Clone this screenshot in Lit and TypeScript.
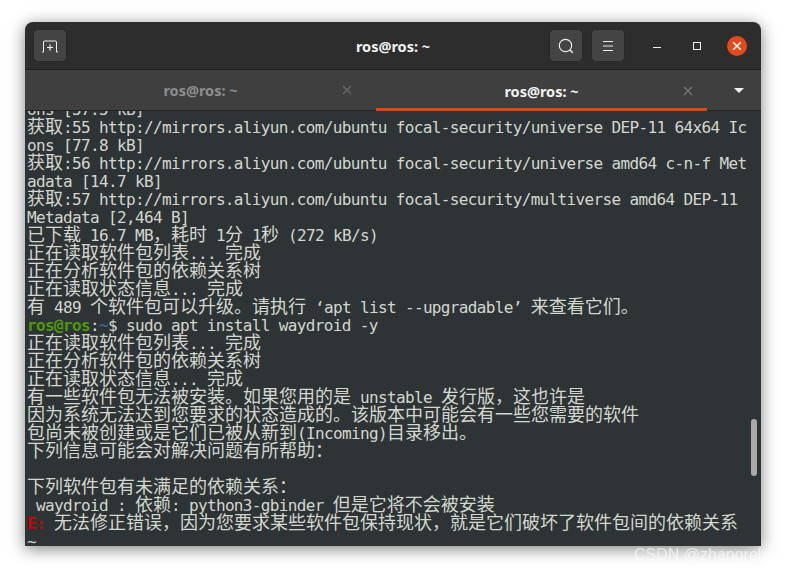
import { LitElement, html, css } from "lit";
import { customElement } from "lit/decorators.js";

const LINES = [
  "ons [57.5 kB]",
  "获取:55 http://mirrors.aliyun.com/ubuntu focal-security/universe DEP-11 64x64 Ic",
  "ons [77.8 kB]",
  "获取:56 http://mirrors.aliyun.com/ubuntu focal-security/universe amd64 c-n-f Met",
  "adata [14.7 kB]",
  "获取:57 http://mirrors.aliyun.com/ubuntu focal-security/multiverse amd64 DEP-11",
  "Metadata [2,464 B]",
  "已下载 16.7 MB，耗时 1分 1秒 (272 kB/s)",
  "正在读取软件包列表... 完成",
  "正在分析软件包的依赖关系树",
  "正在读取状态信息... 完成",
  "有 489 个软件包可以升级。请执行 ‘apt list --upgradable’ 来查看它们。",
  "@@prompt",
  "正在读取软件包列表... 完成",
  "正在分析软件包的依赖关系树",
  "正在读取状态信息... 完成",
  "有一些软件包无法被安装。如果您用的是 unstable 发行版，这也许是",
  "因为系统无法达到您要求的状态造成的。该版本中可能会有一些您需要的软件",
  "包尚未被创建或是它们已被从新到(Incoming)目录移出。",
  "下列信息可能会对解决问题有所帮助：",
  "",
  "下列软件包有未满足的依赖关系：",
  " waydroid : 依赖: python3-gbinder 但是它将不会被安装",
  "@@error",
  "~",
];

function runs(text: string) {
  const parts = text.match(/[\u3000-\u9fff\uff00-\uffef]+|[^\u3000-\u9fff\uff00-\uffef]+/g) || [];
  return parts.map((p) =>
    /^[\u3000-\u9fff\uff00-\uffef]/.test(p) ? html`<span class="cjk">${p}</span>` : html`<span>${p}</span>`
  );
}

@customElement("app-root")
export class AppRoot extends LitElement {
  static styles = css`
    :host {
      display: block;
      height: 574px;
      background: #fff;
      position: relative;
      overflow: hidden;
    }
    .page {
      padding: 22px 25px 28px;
      box-sizing: border-box;
      height: 574px;
    }
    .window {
      height: 524px;
      display: flex;
      flex-direction: column;
      border-radius: 8px 8px 0 0;
      overflow: hidden;
      box-shadow: 0 3px 16px rgba(0, 0, 0, 0.5);
      font-family: "Noto Sans", "Open Sans", sans-serif;
    }
    .header {
      height: 47px;
      flex: none;
      background: #2d2d2d;
      border-bottom: 1px solid #1e1e1e;
      display: grid;
      grid-template-columns: 1fr auto 1fr;
      align-items: center;
    }
    .title {
      color: #f2f2f2;
      font-weight: 700;
      font-size: 14.5px;
    }
    .left {
      display: flex;
      padding-left: 8px;
    }
    .right {
      display: flex;
      align-items: center;
      justify-content: flex-end;
      padding-right: 14px;
    }
    .btn {
      width: 34px;
      height: 33px;
      box-sizing: border-box;
      background: #444;
      border: 1px solid #282828;
      border-radius: 5px;
      display: flex;
      align-items: center;
      justify-content: center;
    }
    .btn + .btn {
      margin-left: 8px;
    }
    svg {
      display: block;
    }
    .min {
      margin-left: 28px;
    }
    .max {
      margin-left: 32px;
    }
    .close {
      margin-left: 26px;
      width: 20px;
      height: 20px;
      border-radius: 50%;
      background: #e2491b;
      display: flex;
      align-items: center;
      justify-content: center;
    }
    .tabs {
      flex: none;
      background: #3f3f3f;
      border-bottom: 1px solid #232323;
      box-sizing: border-box;
      display: flex;
      height: 41px;
    }
    .tab {
      display: grid;
      grid-template-columns: 1fr auto 1fr;
      align-items: center;
      box-sizing: border-box;
      font-size: 14.5px;
      font-weight: 700;
    }
    .tab.off {
      width: 351px;
      color: #8e8e8e;
    }
    .tab.on {
      width: 331px;
      color: #f2f2f2;
      border-bottom: 3px solid #dd4814;
      margin-bottom: -1px;
      padding-top: 3px;
    }
    .x {
      justify-self: end;
    }
    .off .x {
      margin-right: 23px;
    }
    .on .x {
      margin-right: 13px;
    }
    .drop {
      flex: 1;
      display: flex;
      align-items: center;
      justify-content: center;
      padding-left: 10px;
    }
    .term {
      flex: 1;
      min-height: 0;
      background: #2e3436;
      color: #d3d7cf;
      overflow: hidden;
      position: relative;
      padding-left: 2px;
      font-family: "DejaVu Sans Mono", "Liberation Mono", "Noto Sans CJK SC", monospace;
      font-size: 16px;
      letter-spacing: -0.64px;
    }
    .lines {
      margin-top: -10px;
    }
    .line {
      height: 18px;
      line-height: 18px;
      white-space: pre;
    }
    .cjk {
      font-family: "Noto Sans CJK SC", sans-serif;
      font-size: 18px;
      letter-spacing: 0;
      line-height: 0;
    }
    .g {
      color: #4e9a06;
      font-weight: 700;
    }
    .b {
      color: #3465a4;
      font-weight: 700;
    }
    .r {
      color: #cc0000;
      font-weight: 700;
    }
    .thumb {
      position: absolute;
      left: 726px;
      top: 308px;
      width: 6px;
      height: 57px;
      border-radius: 3px;
      background: #a9a9a9;
    }
    .mark {
      position: absolute;
      left: 634px;
      top: 546px;
      font-family: "Liberation Sans", sans-serif;
      font-size: 16px;
      color: rgba(255, 255, 255, 0.62);
      white-space: nowrap;
      filter: blur(0.3px);
    }
  `;

  line(l: string) {
    if (l === "@@prompt") {
      return html`<div class="line"><span class="g">ros@ros</span>:<span class="b">~</span>$ sudo apt install waydroid -y</div>`;
    }
    if (l === "@@error") {
      return html`<div class="line"><span class="r">E:</span> ${runs("无法修正错误，因为您要求某些软件包保持现状，就是它们破坏了软件包间的依赖关系")}</div>`;
    }
    return html`<div class="line">${runs(l)}</div>`;
  }

  x(color: string) {
    return html`<svg class="x" width="12" height="12" viewBox="0 0 12 12"><path d="M2 2l8 8M10 2l-8 8" stroke="${color}" stroke-width="1.2" fill="none"/></svg>`;
  }

  render() {
    return html`
      <div class="page">
        <div class="window">
          <div class="header">
            <div class="left">
              <div class="btn">
                <svg width="16" height="16" viewBox="0 0 16 16" fill="none" stroke="#eee" stroke-width="1">
                  <path d="M0 14h1.5V4a1 1 0 0 1 1-1h11a1 1 0 0 1 1 1V14H16"/>
                  <path d="M8 6.5v6M5 9.5h6" stroke-width="1.2"/>
                </svg>
              </div>
            </div>
            <div class="title">ros@ros: ~</div>
            <div class="right">
              <div class="btn">
                <svg width="16" height="16" viewBox="0 0 16 16" fill="none" stroke="#eee">
                  <circle cx="7.5" cy="7.5" r="6.2" stroke-width="1.2"/>
                  <path d="M12 12l2.7 2.7" stroke-width="1.6"/>
                </svg>
              </div>
              <div class="btn">
                <svg width="12" height="12" viewBox="0 0 12 12" stroke="#eee" stroke-width="1.2">
                  <path d="M1 1.5h10M1 6h10M1 10.5h10"/>
                </svg>
              </div>
              <svg class="min" width="8" height="8" viewBox="0 0 8 8" stroke="#eee" stroke-width="1"><path d="M0 5.5h8"/></svg>
              <svg class="max" width="8" height="8" viewBox="0 0 8 8" fill="none" stroke="#eee" stroke-width="1"><rect x=".5" y=".5" width="7" height="7"/></svg>
              <div class="close">
                <svg width="10" height="10" viewBox="0 0 10 10" stroke="#fff" stroke-width="1.5"><path d="M1.2 1.2l7.6 7.6M8.8 1.2l-7.6 7.6"/></svg>
              </div>
            </div>
          </div>
          <div class="tabs">
            <div class="tab off"><span></span><span>ros@ros: ~</span>${this.x("#6a6a6a")}</div>
            <div class="tab on"><span></span><span>ros@ros: ~</span>${this.x("#777")}</div>
            <div class="drop">
              <svg width="10" height="5" viewBox="0 0 10 5"><path d="M0 0h10L5 5z" fill="#f2f2f2"/></svg>
            </div>
          </div>
          <div class="term">
            <div class="lines">${LINES.map((l) => this.line(l))}</div>
            <div class="thumb"></div>
          </div>
        </div>
      </div>
      <div class="mark">CSDN @zhangrelay</div>
    `;
  }
}
